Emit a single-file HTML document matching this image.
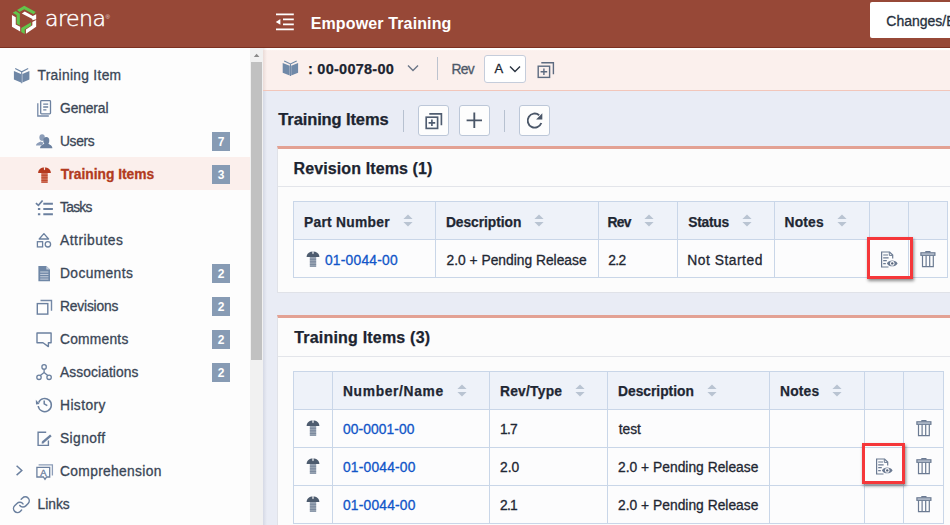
<!DOCTYPE html>
<html lang="en">
<head>
<meta charset="utf-8">
<title>Empower Training</title>
<style>
*{box-sizing:border-box;margin:0;padding:0}
html,body{width:950px;height:525px;overflow:hidden;background:#e9ecf5}
body{font-family:"Liberation Sans",sans-serif;font-size:14px;color:#1f2733;position:relative}
.abs{position:absolute}
.tx{display:inline-block;white-space:nowrap}
#hdr{left:0;top:0;width:950px;height:48px;background:#974837;border-bottom:1px solid #7c3021}
#hdr .title{left:0;top:0;padding-left:310.7px;height:46px;line-height:47px;color:#fff;font-weight:bold;font-size:16px;white-space:nowrap}
#hdr .brand{left:0;padding-left:46px;top:0;height:38px;line-height:37.4px;color:#fff;font-size:22px;white-space:nowrap;font-family:"DejaVu Sans","Liberation Sans",sans-serif;font-weight:200;-webkit-text-stroke:0.45px #fff}
#hdr .brand .reg{position:absolute;left:105.5px;top:11.5px;line-height:10px;font-size:6px;opacity:.75;-webkit-text-stroke:0;font-family:"Liberation Sans",sans-serif}
#chg{left:870px;top:2px;width:90px;height:36px;background:#fff;color:#27303d;font-size:14px;line-height:39px;padding-left:16.3px;white-space:nowrap;overflow:hidden;border-radius:2px}
#side{left:0;top:48px;width:250px;height:477px;background:#fdfdfd}
.nav{position:absolute;left:0;width:250px;height:33px;line-height:35px;color:#3a4656;white-space:nowrap;font-size:13.8px}
.nav.act{background:#fbefec;color:#b23a20;font-weight:bold}
.nav .t{position:absolute;left:60px;top:0}
.nav.top .t{left:37.5px}
.nav svg{position:absolute}
.bdg{position:absolute;left:212px;top:8px;width:18px;height:19px;background:#879bb4;color:#fff;font-size:12px;font-weight:bold;line-height:20px;text-align:center}
#sb{left:250px;top:48px;width:13px;height:477px;background:#f1f1f1}
#sb .th{left:1px;top:14px;width:11px;height:298px;background:#c1c1c1}
#crumb{left:263px;top:48px;width:687px;height:43px;background:linear-gradient(90deg,rgba(90,40,30,.10),rgba(90,40,30,0) 4px),linear-gradient(#fff,#fff 1.6px,#fbf0ed 2.6px);border-bottom:1px solid #f2c6ba}
#tool{left:263px;top:91px;width:687px;height:434px;background:linear-gradient(90deg,rgba(40,50,90,.10),rgba(40,50,90,0) 4px),#e9ecf5}
.card{background:#fcfcfc;border:1px solid #e0e2e8;border-top:3px solid #e3a193}
.card h2{position:absolute;left:15.6px;margin-top:-0.3px;font-size:16px;font-weight:bold;color:#1c2430;white-space:nowrap;line-height:22px}
.card .hr{position:absolute;left:0;right:0;height:1px;background:#e3e5ea}
.btn{position:absolute;background:#fdfdfd;border:1px solid #bcc7d8;border-radius:3px}
.btn svg{position:absolute}
table{position:absolute;table-layout:fixed;border-collapse:separate;border-spacing:0;border-top:1px solid #c9d6e8;border-left:1px solid #c9d6e8}
td,th{border:0;border-right:1px solid #c9d6e8;border-bottom:1px solid #c9d6e8;height:38px;text-align:left;padding:1px 0 0 10px;font-size:13.8px;white-space:nowrap;overflow:hidden;color:#1f2733;vertical-align:middle}
th{background:#eef2f9;font-weight:bold}
td{background:#fcfcfd}
th .so{margin-left:13px;vertical-align:-1px}
td.ic{padding:0;text-align:center}
td.ic svg{vertical-align:middle}
a{color:#1155c8;text-decoration:none}
.cnum{left:46px;top:0;height:42px;line-height:42px;font-weight:bold;font-size:14.5px;color:#1c2430;white-space:nowrap}
.crev{left:189.2px;top:0;height:44px;line-height:44px;font-size:13.8px;color:#4d5868}
.sel{left:221px;top:7px;width:42px;height:28px;border:1px solid #c5cddb;border-radius:3px;background:#fff;line-height:26px;font-size:13px;color:#1c2430;padding-left:9.5px}
.ttl{left:15.3px;top:15px;height:28px;line-height:26px;font-weight:bold;font-size:16.5px;color:#1c2430;white-space:nowrap}
.redbox{position:absolute;border:3px solid #f5373a;box-shadow:1px 2px 3px rgba(0,0,0,.45)}
td.ic svg{position:relative;top:0.3px}
td.ic svg.scr{top:-0.4px}
.t1 td.ic svg{top:0.9px}
svg.s1{vertical-align:1.6px;margin:-6px 6.8px -6px 1.7px}
.nav .tx,td .tx,#chgt,.crev .tx,.sel .tx{-webkit-text-stroke:0.3px currentColor}
.t1 .tx{position:relative;top:1.1px}
.t1 svg.s1{position:relative;top:0.5px}
th .tx,.ttl .tx,.card h2 .tx,.cnum .tx{-webkit-text-stroke:0.25px currentColor}

</style>
</head>
<body>
<div id="hdr" class="abs">
  <svg class="abs" style="left:6px;top:0" width="40" height="40" viewBox="0 0 525 525"><g fill="#62c54b"><path d="M145,132L240,76L390,158L362,188L240,120L178,158Z"/><path d="M88,168L128,146L182,180V335L140,312V200Z"/><path d="M200,368L330,292V336L246,386V446L200,420Z"/></g><g fill="#fff"><path d="M78,198L128,225V322L186,352V412L78,352Z"/><path d="M208,176L246,150L352,210L396,186V254L346,266V250Z"/><path d="M396,262V352L262,442V388L346,332V290Z"/></g></svg>
  <div class="abs brand"><span id="brand" class="tx " style="letter-spacing:-0.500px;margin-left:-1.00px">arena</span><span class="reg">®</span></div>
  <svg class="abs" style="left:274px;top:10px" width="22" height="22" viewBox="274 10 22 22"><path d="M276,14.4H293.8 M283,19.4H293.8 M283,24.4H293.8 M276,29.4H293.8" stroke="#fff" stroke-width="1.9"/><path d="M275.8,21.9L280.4,19V24.8Z" fill="#fff"/></svg>
  <div class="abs title"><span id="title" class="tx " style="letter-spacing:0.133px;margin-left:0.00px">Empower Training</span></div>
  <div id="chg" class="abs"><span id="chgt" class="tx " style="letter-spacing:0.000px;margin-left:0.00px">Changes/E</span></div>
</div>
<div id="side" class="abs">
<div class="nav top" style="top:10px"><svg style="left:0;top:0" width="58" height="33" viewBox="0 0 58 33" fill="none" stroke="#6b809f" stroke-width="1.4"><path d="M13.9,12.9L21,15.9V24.6L13.9,21.6Z M22.4,15.9L29.4,12.9V21.6L22.4,24.6Z" fill="#6f87a6" stroke="none"/><path d="M15.2,10.4L21.7,13.8L28.2,10.4 M21.7,13.8V25.2" stroke-width="1.1" stroke="#6f87a6"/></svg><span class="t"><span id="n0" class="tx " style="letter-spacing:0.300px;margin-left:0.00px">Training Item</span></span></div>
<div class="nav " style="top:43px"><svg style="left:0;top:0" width="58" height="33" viewBox="0 0 58 33" fill="none" stroke="#6b809f" stroke-width="1.4"><rect x="40.7" y="9.7" width="9.8" height="13.2" rx="0.8" stroke-width="1.3"/><path d="M43.2,13.2H48.2 M43.2,16H48.2 M43.2,18.9H46.4" stroke-width="1.3"/><path d="M37.8,12.3V25H48.8" stroke-width="1.3" stroke="#7488a6"/></svg><span class="t"><span id="n1" class="tx " style="letter-spacing:-0.100px;margin-left:0.00px">General</span></span></div>
<div class="nav " style="top:76px"><svg style="left:0;top:0" width="58" height="33" viewBox="0 0 58 33" fill="none" stroke="#6b809f" stroke-width="1.4"><g stroke="none"><ellipse cx="42.1" cy="13.6" rx="2.7" ry="3.3" fill="#8c9db8"/><path d="M35.9,21.5C36.2,19.2 38.6,18.8 40.6,17.6L43.4,18.4L42.4,21L39.8,21.5Z" fill="#8c9db8"/><ellipse cx="46.3" cy="16.7" rx="3" ry="3.7" fill="#6b809f"/><path d="M40.1,24.3C40.1,21.6 42.6,21 44.4,19.6L48.2,19.6C50,21 52.4,21.6 52.4,24.3Z" fill="#6b809f"/></g></svg><span class="t"><span id="n2" class="tx " style="letter-spacing:-0.350px;margin-left:0.00px">Users</span></span><span class="bdg">7</span></div>
<div class="nav act" style="top:109px"><svg style="left:0;top:0" width="58" height="33" viewBox="0 0 58 33" fill="none" stroke="#6b809f" stroke-width="1.4"><path d="M38.1,16.1 C38.1,12.4 40.9,10.4 44.5,10.4 C48.1,10.4 50.900000000000006,12.4 50.900000000000006,16.1 Z" fill="#b5391f" stroke="none"/><path d="M43.9,10.200000000000001 h1.2 v2.4 l-0.6,0.7 l-0.6,-0.7 z" fill="#fbefec" stroke="none"/><rect x="41.35" y="16.45" width="6.3" height="1.2" fill="#c04a30" stroke="none"/><rect x="41.35" y="18.07" width="6.3" height="1.2" fill="#c04a30" stroke="none"/><rect x="41.35" y="19.69" width="6.3" height="1.2" fill="#c04a30" stroke="none"/><rect x="41.35" y="21.31" width="6.3" height="1.2" fill="#c04a30" stroke="none"/><rect x="41.35" y="22.93" width="6.3" height="1.2" fill="#c04a30" stroke="none"/><rect x="41.35" y="24.55" width="6.3" height="1.2" fill="#c04a30" stroke="none"/><rect x="41.35" y="16.1" width="6.3" height="9.7" fill="#c04a30" opacity="0.55" stroke="none"/></svg><span class="t"><span id="n3" class="tx " style="letter-spacing:-0.015px;margin-left:0.80px">Training Items</span></span><span class="bdg">3</span></div>
<div class="nav " style="top:142px"><svg style="left:0;top:0" width="58" height="33" viewBox="0 0 58 33" fill="none" stroke="#6b809f" stroke-width="1.4"><path d="M35.9,13.2L38.4,15.3L42.6,10.5" stroke-width="1.7"/><path d="M43.3,13.8H52.9 M43.3,19H52.9 M43.3,24.2H52.9" stroke-width="1.9"/><path d="M37.9,19H40.3 M37.9,24.2H40.3" stroke-width="2.1"/></svg><span class="t"><span id="n4" class="tx " style="letter-spacing:-0.700px;margin-left:0.00px">Tasks</span></span></div>
<div class="nav " style="top:175px"><svg style="left:0;top:0" width="58" height="33" viewBox="0 0 58 33" fill="none" stroke="#6b809f" stroke-width="1.4"><path d="M43.9,10.6L48.6,16H39.2Z" stroke-width="1.3" stroke-linejoin="round"/><rect x="37.4" y="18.7" width="5.2" height="5.2" stroke-width="1.3"/><circle cx="47.9" cy="21.3" r="2.7" stroke-width="1.3"/></svg><span class="t"><span id="n5" class="tx " style="letter-spacing:0.511px;margin-left:0.00px">Attributes</span></span></div>
<div class="nav " style="top:208px"><svg style="left:0;top:0" width="58" height="33" viewBox="0 0 58 33" fill="none" stroke="#6b809f" stroke-width="1.4"><path d="M38.4,9.9H46.3L50,13.6V25.2H38.4Z" fill="#6f87a6" stroke="none"/><path d="M46.3,9.9V13.6H50Z" fill="#c3cddb" stroke="none"/><path d="M40.2,16H48.4 M40.2,18.4H48.4 M40.2,20.8H48.4 M40.2,23.1H48.4" stroke="#c9d2df" stroke-width="1"/></svg><span class="t"><span id="n6" class="tx " style="letter-spacing:0.375px;margin-left:0.00px">Documents</span></span><span class="bdg">2</span></div>
<div class="nav " style="top:241px"><svg style="left:0;top:0" width="58" height="33" viewBox="0 0 58 33" fill="none" stroke="#6b809f" stroke-width="1.4"><rect x="37.3" y="14.6" width="10.5" height="10.5" stroke-width="1.4"/><path d="M40.5,11.5H51.5V21.8" stroke-width="1.4" stroke="#7488a6"/></svg><span class="t"><span id="n7" class="tx " style="letter-spacing:-0.175px;margin-left:0.00px">Revisions</span></span><span class="bdg">2</span></div>
<div class="nav " style="top:274px"><svg style="left:0;top:0" width="58" height="33" viewBox="0 0 58 33" fill="none" stroke="#6b809f" stroke-width="1.4"><path d="M37,11H51.1V20.8H48.4V24.6L43,20.8H37Z" stroke-width="1.4" stroke-linejoin="round"/></svg><span class="t"><span id="n8" class="tx " style="letter-spacing:0.229px;margin-left:0.00px">Comments</span></span><span class="bdg">2</span></div>
<div class="nav " style="top:307px"><svg style="left:0;top:0" width="58" height="33" viewBox="0 0 58 33" fill="none" stroke="#6b809f" stroke-width="1.4"><circle cx="44.1" cy="11.9" r="2.2" stroke-width="1.3"/><circle cx="39" cy="22.3" r="2.2" stroke-width="1.3"/><circle cx="49.1" cy="22.3" r="2.2" stroke-width="1.3"/><path d="M44.1,14.1V17.4L40.3,20.6 M44.1,17.4L47.8,20.6" stroke-width="1.3"/></svg><span class="t"><span id="n9" class="tx " style="letter-spacing:0.091px;margin-left:0.00px">Associations</span></span><span class="bdg">2</span></div>
<div class="nav " style="top:340px"><svg style="left:0;top:0" width="58" height="33" viewBox="0 0 58 33" fill="none" stroke="#6b809f" stroke-width="1.4"><g transform="translate(0,0.4)"><path d="M38.6,14.2A6.6,6.6 0 1 1 38.2,17.6" stroke-width="1.5"/><path d="M35.8,11.4L39.6,15.6L36,16.2Z" fill="#6b809f" stroke="none"/><path d="M44.2,12V15.4L47.3,17.2" stroke-width="1.5"/></g></svg><span class="t"><span id="n10" class="tx " style="letter-spacing:0.417px;margin-left:0.00px">History</span></span></div>
<div class="nav " style="top:373px"><svg style="left:0;top:0" width="58" height="33" viewBox="0 0 58 33" fill="none" stroke="#6b809f" stroke-width="1.4"><path d="M46.2,11.3H38.1V24.4H48.4V19.6" stroke-width="1.4"/><path d="M43,21.2L50.9,14.4" stroke-width="2.4"/><path d="M41.9,22.3L44,21.9L42.4,20.3Z" fill="#6b809f" stroke-width="0.6"/></svg><span class="t"><span id="n11" class="tx " style="letter-spacing:0.417px;margin-left:0.00px">Signoff</span></span></div>
<div class="nav " style="top:406px"><svg style="left:0;top:0" width="58" height="33" viewBox="0 0 58 33" fill="none" stroke="#6b809f" stroke-width="1.4"><path d="M16.6,11.8L21.8,16.5L16.6,21.1" stroke-width="1.5"/><path d="M36.9,13.3H49.7V23H46.6L45,25.3L43.4,23H36.9Z" stroke-width="1.3"/><path d="M38.6,10.9H52.4V21.6" stroke-width="1.3" stroke="#8c9db8"/><text x="43.3" y="21.6" font-family="Liberation Sans, sans-serif" font-size="9.5" text-anchor="middle" fill="#6b809f" stroke="#6b809f" stroke-width="0.35">A</text></svg><span class="t"><span id="n12" class="tx " style="letter-spacing:0.333px;margin-left:0.00px">Comprehension</span></span></div>
<div class="nav top" style="top:439px"><svg style="left:0;top:0" width="58" height="33" viewBox="0 0 58 33" fill="none" stroke="#6b809f" stroke-width="1.4"><g transform="translate(11.9,8.2) scale(0.79)" stroke-width="1.9" stroke-linecap="round"><path d="M10 13a5 5 0 0 0 7.54.54l3-3a5 5 0 0 0-7.07-7.07l-1.72 1.71"/><path d="M14 11a5 5 0 0 0-7.54-.54l-3 3a5 5 0 0 0 7.07 7.07l1.71-1.71"/></g></svg><span class="t"><span id="n13" class="tx " style="letter-spacing:0.000px;margin-left:0.00px">Links</span></span></div>
</div>
<div id="sb" class="abs"><svg class="abs" style="left:2px;top:4px" width="9" height="6" viewBox="0 0 9 6"><path d="M4.6 1.8L7.4 5H1.8z" fill="#8a8a8a"/></svg><div class="abs th"></div></div>
<div id="crumb" class="abs">
  <svg class="abs" style="left:17px;top:10px" width="20" height="20" viewBox="280 58 20 20"><path d="M282.7,63.1L289.7,65.7V75.5L282.7,72.8Z M291.2,65.7L298.1,63.1V72.8L291.2,75.5Z" fill="#7089a8"/><path d="M284.2,60.9L290.45,64L296.7,60.9 M290.45,64V75.9" stroke="#7089a8" stroke-width="1.1" fill="none"/></svg>
  <div class="abs cnum"><span id="cnum" class="tx " style="letter-spacing:0.255px;margin-left:-1.00px">: 00-0078-00</span></div>
  <div class="abs" style="left:143.6px;top:16.2px;line-height:0"><svg width="12" height="8" viewBox="0 0 12 8"><path d="M1 1.5L6 6.5L11 1.5" fill="none" stroke="#6b7687" stroke-width="1.4"/></svg></div>
  <div class="abs" style="left:174px;top:9px;width:1.3px;height:23px;background:#bcc3cf"></div>
  <div class="abs crev"><span id="crev" class="tx " style="letter-spacing:-0.700px;margin-left:-0.80px">Rev</span></div>
  <div class="abs sel"><span id="selA" class="tx " style="letter-spacing:0.000px;margin-left:0.00px">A</span><span class="abs" style="left:23.5px;top:0;line-height:0;margin-top:9.2px"><svg width="12" height="8" viewBox="0 0 12 8"><path d="M1 1.5L6 6.5L11 1.5" fill="none" stroke="#2a3340" stroke-width="1.4"/></svg></span></div>
  <svg class="abs" style="left:272px;top:12px" width="22" height="20" viewBox="535 60 22 20"><rect x="538.2" y="66.2" width="11.4" height="11.2" fill="none" stroke="#5d6b80" stroke-width="1.4"/><path d="M541.3000000000001,62.800000000000004H553.4000000000001V74.2" fill="none" stroke="#5d6b80" stroke-width="1.4"/><path d="M540.6,71.8H547.2 M543.9000000000001,68.5V75.10000000000001" stroke="#5d6b80" stroke-width="1.4"/></svg>
</div>
<div id="tool" class="abs">
  <div class="abs ttl"><span id="ttl" class="tx " style="letter-spacing:-0.115px;margin-left:0.00px">Training Items</span></div>
  <div class="abs" style="left:140px;top:19px;width:1.3px;height:22px;background:#b7c1d0"></div>
  <div class="btn" style="left:155px;top:14px;width:31px;height:31px"><svg style="left:4px;top:4px" width="24" height="24" viewBox="423 110 24 24"><rect x="426.2" y="117.2" width="11.4" height="11.2" fill="none" stroke="#4f5c70" stroke-width="1.65"/><path d="M429.3,113.8H441.4V125.2" fill="none" stroke="#4f5c70" stroke-width="1.65"/><path d="M428.59999999999997,122.8H435.2 M431.9,119.5V126.10000000000001" stroke="#4f5c70" stroke-width="1.65"/></svg></div>
  <div class="btn" style="left:196px;top:14px;width:31px;height:31px"><svg style="left:4px;top:4px" width="22" height="22" viewBox="464 110 22 22"><path d="M466.6,120.3H482 M474.3,112.6V128" stroke="#4a5668" stroke-width="1.85"/></svg></div>
  <div class="abs" style="left:241px;top:19px;width:1.3px;height:22px;background:#b7c1d0"></div>
  <div class="btn" style="left:256px;top:14px;width:31px;height:31px"><svg style="left:4px;top:4px" width="22" height="22" viewBox="524 110 22 22"><path d="M541.3,123A7,7 0 1 1 539.2,115.2" fill="none" stroke="#4a5668" stroke-width="1.9"/><path d="M542.3,113.2V119.4H536.1Z" fill="#4a5668"/></svg></div>
</div>
<div id="card1" class="abs card" style="left:277px;top:146px;width:690px;height:147px">
  <h2 style="top:9px"><span id="ct1" class="tx " style="letter-spacing:0.106px;margin-left:0.00px">Revision Items (1)</span></h2>
  <div class="hr" style="top:37px"></div>
  <table class="t1" style="left:15px;top:52px;width:655px"><colgroup><col style="width:142px"><col style="width:163px"><col style="width:79px"><col style="width:97px"><col style="width:95px"><col style="width:39px"><col style="width:39px"></colgroup>
<tr><th><span id="h1a" class="tx " style="letter-spacing:0.280px;margin-left:0.00px">Part Number</span><svg class="so" width="10" height="13" viewBox="0 0 10 13"><path d="M5 0.5L9.6 5H0.4z M5 12.5L0.4 8H9.6z" fill="#b9c4d2"/></svg></th><th><span id="h1b" class="tx " style="letter-spacing:-0.040px;margin-left:-0.10px">Description</span><svg class="so" width="10" height="13" viewBox="0 0 10 13"><path d="M5 0.5L9.6 5H0.4z M5 12.5L0.4 8H9.6z" fill="#b9c4d2"/></svg></th><th><span id="h1c" class="tx " style="letter-spacing:-0.700px;margin-left:-1.40px">Rev</span><svg class="so" width="10" height="13" viewBox="0 0 10 13"><path d="M5 0.5L9.6 5H0.4z M5 12.5L0.4 8H9.6z" fill="#b9c4d2"/></svg></th><th><span id="h1d" class="tx " style="letter-spacing:-0.240px;margin-left:0.20px">Status</span><svg class="so" width="10" height="13" viewBox="0 0 10 13"><path d="M5 0.5L9.6 5H0.4z M5 12.5L0.4 8H9.6z" fill="#b9c4d2"/></svg></th><th><span id="h1e" class="tx " style="letter-spacing:0.175px;margin-left:-0.40px">Notes</span><svg class="so" width="10" height="13" viewBox="0 0 10 13"><path d="M5 0.5L9.6 5H0.4z M5 12.5L0.4 8H9.6z" fill="#b9c4d2"/></svg></th><th></th><th></th></tr>
<tr><td><svg class="s1" width="14" height="17" viewBox="0 0 14 17"><path d="M0.6,6.1000000000000005 C0.6,2.4 3.4,0.4 7.0,0.4 C10.6,0.4 13.4,2.4 13.4,6.1000000000000005 Z" fill="#4d5b6e" stroke="none"/><path d="M6.3999999999999995,0.2 h1.2 v2.4 l-0.6,0.7 l-0.6,-0.7 z" fill="#fcfcfd" stroke="none"/><rect x="3.85" y="6.45" width="6.3" height="1.2" fill="#7c8a9e" stroke="none"/><rect x="3.85" y="8.07" width="6.3" height="1.2" fill="#7c8a9e" stroke="none"/><rect x="3.85" y="9.69" width="6.3" height="1.2" fill="#7c8a9e" stroke="none"/><rect x="3.85" y="11.31" width="6.3" height="1.2" fill="#7c8a9e" stroke="none"/><rect x="3.85" y="12.93" width="6.3" height="1.2" fill="#7c8a9e" stroke="none"/><rect x="3.85" y="14.55" width="6.3" height="1.2" fill="#7c8a9e" stroke="none"/><rect x="3.85" y="6.1000000000000005" width="6.3" height="9.7" fill="#7c8a9e" opacity="0.55" stroke="none"/></svg><a id="c1a" class="tx " style="letter-spacing:0.244px;margin-left:-1.60px">01-0044-00</a></td><td><span id="c1b" class="tx " style="letter-spacing:0.000px;margin-left:0.60px">2.0 + Pending Release</span></td><td><span id="c1c" class="tx " style="letter-spacing:-0.700px;margin-left:-0.70px">2.2</span></td><td><span id="c1d" class="tx " style="letter-spacing:0.520px;margin-left:-0.70px">Not Started</span></td><td></td><td class=ic><svg class="ci" width="18" height="17" viewBox="0 0 18 17"><g fill="none" stroke="#6b7a92" stroke-width="1.2"><path d="M8.5,16H1.6V1H9.6L12.7,4.1V7.5"/><path d="M9.3,1.2V4.4H12.5" stroke-width="1"/><path d="M3.2,4H8 M3.2,6.8H8.6 M3.2,9.7H6.8 M3.2,12.7H5.8"/></g><path d="M6.9,12.4C9,8.6 15.4,8.6 17.6,12.4C15.4,16.2 9,16.2 6.9,12.4Z" fill="#6b7a92"/><circle cx="12.25" cy="12.4" r="2.3" fill="#fcfcfd"/><circle cx="12.25" cy="12.4" r="1.2" fill="#566379"/></svg></td><td class=ic><svg class="ci" width="16" height="17" viewBox="0 0 16 17"><g stroke="#6b7a92" stroke-width="1.2"><rect x="0.9" y="1.8" width="14" height="2.5" fill="#c5cedb"/><path d="M5.9,1.6V0.7H9.9V1.6" fill="none"/><path d="M2.5,4.4V15.7H13.3V4.4 M6.1,4.6V15.4 M9.7,4.6V15.4" fill="none"/></g></svg></td></tr>
</table>
  <div class="redbox" style="left:589px;top:87.5px;width:45.5px;height:42.5px"></div>
</div>
<div id="card2" class="abs card" style="left:277px;top:315px;width:690px;height:230px">
  <h2 style="top:9px"><span id="ct2" class="tx " style="letter-spacing:0.200px;margin-left:0.60px">Training Items (3)</span></h2>
  <div class="hr" style="top:38px"></div>
  <table class="t2" style="left:15px;top:53px;width:651px"><colgroup><col style="width:39px"><col style="width:157px"><col style="width:118px"><col style="width:162px"><col style="width:95px"><col style="width:39px"><col style="width:40px"></colgroup>
<tr><th></th><th><span id="h2a" class="tx " style="letter-spacing:0.660px;margin-left:0.00px">Number/Name</span><svg class="so" width="10" height="13" viewBox="0 0 10 13"><path d="M5 0.5L9.6 5H0.4z M5 12.5L0.4 8H9.6z" fill="#b9c4d2"/></svg></th><th><span id="h2b" class="tx " style="letter-spacing:0.243px;margin-left:0.00px">Rev/Type</span><svg class="so" width="10" height="13" viewBox="0 0 10 13"><path d="M5 0.5L9.6 5H0.4z M5 12.5L0.4 8H9.6z" fill="#b9c4d2"/></svg></th><th><span id="h2c" class="tx " style="letter-spacing:-0.000px;margin-left:0.00px">Description</span><svg class="so" width="10" height="13" viewBox="0 0 10 13"><path d="M5 0.5L9.6 5H0.4z M5 12.5L0.4 8H9.6z" fill="#b9c4d2"/></svg></th><th><span id="h2d" class="tx " style="letter-spacing:0.200px;margin-left:0.00px">Notes</span><svg class="so" width="10" height="13" viewBox="0 0 10 13"><path d="M5 0.5L9.6 5H0.4z M5 12.5L0.4 8H9.6z" fill="#b9c4d2"/></svg></th><th></th><th></th></tr>
<tr><td class=ic><svg class="scr" width="14" height="17" viewBox="0 0 14 17"><path d="M0.6,6.1000000000000005 C0.6,2.4 3.4,0.4 7.0,0.4 C10.6,0.4 13.4,2.4 13.4,6.1000000000000005 Z" fill="#4d5b6e" stroke="none"/><path d="M6.3999999999999995,0.2 h1.2 v2.4 l-0.6,0.7 l-0.6,-0.7 z" fill="#fcfcfd" stroke="none"/><rect x="3.85" y="6.45" width="6.3" height="1.2" fill="#7c8a9e" stroke="none"/><rect x="3.85" y="8.07" width="6.3" height="1.2" fill="#7c8a9e" stroke="none"/><rect x="3.85" y="9.69" width="6.3" height="1.2" fill="#7c8a9e" stroke="none"/><rect x="3.85" y="11.31" width="6.3" height="1.2" fill="#7c8a9e" stroke="none"/><rect x="3.85" y="12.93" width="6.3" height="1.2" fill="#7c8a9e" stroke="none"/><rect x="3.85" y="14.55" width="6.3" height="1.2" fill="#7c8a9e" stroke="none"/><rect x="3.85" y="6.1000000000000005" width="6.3" height="9.7" fill="#7c8a9e" opacity="0.55" stroke="none"/></svg></td><td><a id="r1a" class="tx " style="letter-spacing:0.089px;margin-left:0.00px">00-0001-00</a></td><td><span id="r1b" class="tx " style="letter-spacing:-0.700px;margin-left:0.00px">1.7</span></td><td><span id="r1c" class="tx " style="letter-spacing:0.000px;margin-left:0.70px">test</span></td><td></td><td></td><td class=ic><svg class="ci" width="16" height="17" viewBox="0 0 16 17"><g stroke="#6b7a92" stroke-width="1.2"><rect x="0.9" y="1.8" width="14" height="2.5" fill="#c5cedb"/><path d="M5.9,1.6V0.7H9.9V1.6" fill="none"/><path d="M2.5,4.4V15.7H13.3V4.4 M6.1,4.6V15.4 M9.7,4.6V15.4" fill="none"/></g></svg></td></tr>
<tr><td class=ic><svg class="scr" width="14" height="17" viewBox="0 0 14 17"><path d="M0.6,6.1000000000000005 C0.6,2.4 3.4,0.4 7.0,0.4 C10.6,0.4 13.4,2.4 13.4,6.1000000000000005 Z" fill="#4d5b6e" stroke="none"/><path d="M6.3999999999999995,0.2 h1.2 v2.4 l-0.6,0.7 l-0.6,-0.7 z" fill="#fcfcfd" stroke="none"/><rect x="3.85" y="6.45" width="6.3" height="1.2" fill="#7c8a9e" stroke="none"/><rect x="3.85" y="8.07" width="6.3" height="1.2" fill="#7c8a9e" stroke="none"/><rect x="3.85" y="9.69" width="6.3" height="1.2" fill="#7c8a9e" stroke="none"/><rect x="3.85" y="11.31" width="6.3" height="1.2" fill="#7c8a9e" stroke="none"/><rect x="3.85" y="12.93" width="6.3" height="1.2" fill="#7c8a9e" stroke="none"/><rect x="3.85" y="14.55" width="6.3" height="1.2" fill="#7c8a9e" stroke="none"/><rect x="3.85" y="6.1000000000000005" width="6.3" height="9.7" fill="#7c8a9e" opacity="0.55" stroke="none"/></svg></td><td><a id="r2a" class="tx " style="letter-spacing:0.200px;margin-left:0.00px">01-0044-00</a></td><td><span id="r2b" class="tx " style="letter-spacing:0.050px;margin-left:0.00px">2.0</span></td><td><span id="r2c" class="tx " style="letter-spacing:0.020px;margin-left:0.00px">2.0 + Pending Release</span></td><td></td><td class=ic><svg class="ci" width="18" height="17" viewBox="0 0 18 17"><g fill="none" stroke="#6b7a92" stroke-width="1.2"><path d="M8.5,16H1.6V1H9.6L12.7,4.1V7.5"/><path d="M9.3,1.2V4.4H12.5" stroke-width="1"/><path d="M3.2,4H8 M3.2,6.8H8.6 M3.2,9.7H6.8 M3.2,12.7H5.8"/></g><path d="M6.9,12.4C9,8.6 15.4,8.6 17.6,12.4C15.4,16.2 9,16.2 6.9,12.4Z" fill="#6b7a92"/><circle cx="12.25" cy="12.4" r="2.3" fill="#fcfcfd"/><circle cx="12.25" cy="12.4" r="1.2" fill="#566379"/></svg></td><td class=ic><svg class="ci" width="16" height="17" viewBox="0 0 16 17"><g stroke="#6b7a92" stroke-width="1.2"><rect x="0.9" y="1.8" width="14" height="2.5" fill="#c5cedb"/><path d="M5.9,1.6V0.7H9.9V1.6" fill="none"/><path d="M2.5,4.4V15.7H13.3V4.4 M6.1,4.6V15.4 M9.7,4.6V15.4" fill="none"/></g></svg></td></tr>
<tr><td class=ic><svg class="scr" width="14" height="17" viewBox="0 0 14 17"><path d="M0.6,6.1000000000000005 C0.6,2.4 3.4,0.4 7.0,0.4 C10.6,0.4 13.4,2.4 13.4,6.1000000000000005 Z" fill="#4d5b6e" stroke="none"/><path d="M6.3999999999999995,0.2 h1.2 v2.4 l-0.6,0.7 l-0.6,-0.7 z" fill="#fcfcfd" stroke="none"/><rect x="3.85" y="6.45" width="6.3" height="1.2" fill="#7c8a9e" stroke="none"/><rect x="3.85" y="8.07" width="6.3" height="1.2" fill="#7c8a9e" stroke="none"/><rect x="3.85" y="9.69" width="6.3" height="1.2" fill="#7c8a9e" stroke="none"/><rect x="3.85" y="11.31" width="6.3" height="1.2" fill="#7c8a9e" stroke="none"/><rect x="3.85" y="12.93" width="6.3" height="1.2" fill="#7c8a9e" stroke="none"/><rect x="3.85" y="14.55" width="6.3" height="1.2" fill="#7c8a9e" stroke="none"/><rect x="3.85" y="6.1000000000000005" width="6.3" height="9.7" fill="#7c8a9e" opacity="0.55" stroke="none"/></svg></td><td><a id="r3a" class="tx " style="letter-spacing:0.200px;margin-left:0.00px">01-0044-00</a></td><td><span id="r3b" class="tx " style="letter-spacing:-0.700px;margin-left:0.00px">2.1</span></td><td><span id="r3c" class="tx " style="letter-spacing:0.020px;margin-left:0.00px">2.0 + Pending Release</span></td><td></td><td></td><td class=ic><svg class="ci" width="16" height="17" viewBox="0 0 16 17"><g stroke="#6b7a92" stroke-width="1.2"><rect x="0.9" y="1.8" width="14" height="2.5" fill="#c5cedb"/><path d="M5.9,1.6V0.7H9.9V1.6" fill="none"/><path d="M2.5,4.4V15.7H13.3V4.4 M6.1,4.6V15.4 M9.7,4.6V15.4" fill="none"/></g></svg></td></tr>
</table>
  <div class="redbox" style="left:584px;top:125.4px;width:43.3px;height:40.6px"></div>
</div>
</body>
</html>
